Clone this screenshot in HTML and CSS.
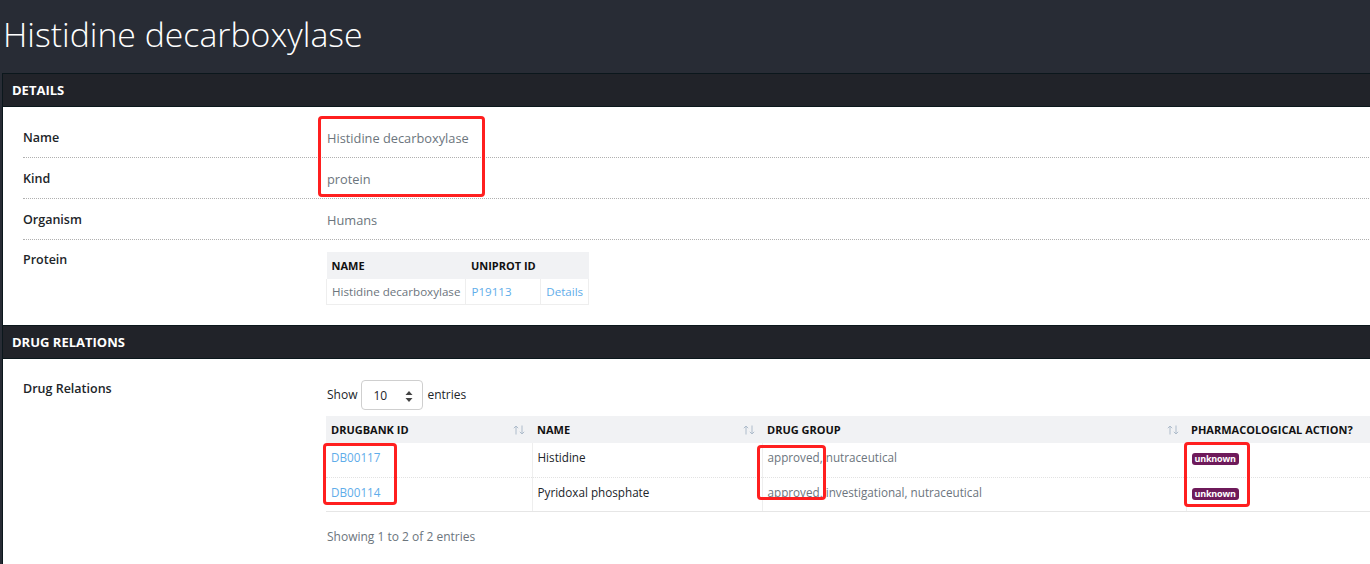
FILE: index.html
```html
<!DOCTYPE html>
<html lang="en">
<head>
  <meta charset="UTF-8">
  <title>Histidine decarboxylase</title>
  <link rel="stylesheet" href="styles.css">
</head>
<body>
  <h1 class="page-title">Histidine decarboxylase</h1>

  <div class="card">
    <!-- Details -->
    <div class="card-header">Details</div>
    <div class="card-body">
      <div class="row">
        <div class="label">Name</div>
        <div class="value">Histidine decarboxylase</div>
      </div>
      <div class="row">
        <div class="label">Kind</div>
        <div class="value">protein</div>
      </div>
      <div class="row">
        <div class="label">Organism</div>
        <div class="value">Humans</div>
      </div>
      <div class="row last">
        <div class="label">Protein</div>
        <div class="value">
          <table class="mini-table">
            <thead>
              <tr><th class="c1">Name</th><th class="c2">Uniprot ID</th><th class="c3"></th></tr>
            </thead>
            <tbody>
              <tr><td>Histidine decarboxylase</td><td><a href="#">P19113</a></td><td><a href="#">Details</a></td></tr>
            </tbody>
          </table>
        </div>
      </div>
    </div>

    <!-- Drug relations -->
    <div class="card-header">Drug Relations</div>
    <div class="card-body tall">
      <div class="row last">
        <div class="label">Drug Relations</div>
        <div class="value">
          <div class="length">
            Show
            <span class="select">10
              <svg class="caret" width="8" height="11" viewBox="0 0 8 11"><path d="M4 0 L7.5 4 H0.5 Z M4 11 L7.5 7 H0.5 Z" fill="#444"/></svg>
            </span>
            entries
          </div>
          <table class="data-table">
            <thead>
              <tr>
                <th class="d1">Drugbank ID<svg class="sort" width="12" height="10" viewBox="0 0 12 10"><path d="M3 9.5 V1 M0.8 3.2 L3 1 L5.2 3.2 M9 0.5 V9 M6.8 6.8 L9 9 L11.2 6.8" fill="none" stroke="#aebccb" stroke-width="1"/></svg></th>
                <th class="d2">Name<svg class="sort" width="12" height="10" viewBox="0 0 12 10"><path d="M3 9.5 V1 M0.8 3.2 L3 1 L5.2 3.2 M9 0.5 V9 M6.8 6.8 L9 9 L11.2 6.8" fill="none" stroke="#aebccb" stroke-width="1"/></svg></th>
                <th class="d3">Drug Group<svg class="sort" width="12" height="10" viewBox="0 0 12 10"><path d="M3 9.5 V1 M0.8 3.2 L3 1 L5.2 3.2 M9 0.5 V9 M6.8 6.8 L9 9 L11.2 6.8" fill="none" stroke="#aebccb" stroke-width="1"/></svg></th>
                <th class="d4">Pharmacological Action?</th>
              </tr>
            </thead>
            <tbody>
              <tr>
                <td><a href="#">DB00117</a></td>
                <td class="dark">Histidine</td>
                <td>approved, nutraceutical</td>
                <td><span class="badge">unknown</span></td>
              </tr>
              <tr>
                <td><a href="#">DB00114</a></td>
                <td class="dark">Pyridoxal phosphate</td>
                <td>approved, investigational, nutraceutical</td>
                <td><span class="badge">unknown</span></td>
              </tr>
            </tbody>
          </table>
          <div class="info">Showing 1 to 2 of 2 entries</div>
        </div>
      </div>
    </div>
  </div>

  <!-- annotation boxes -->
  <div class="mark m1"></div>
  <div class="mark m2"></div>
  <div class="mark m3"></div>
  <div class="mark m4"></div>
</body>
</html>
```

FILE: styles.css
```css
html, body {
  overflow: hidden;
}

body {
  margin: 0;
  background: #282c35;
  font-family: "Open Sans", "Noto Sans", sans-serif;
  font-size: 12.8px;
  color: #212529;
  position: relative;
  height: 564px;
}

a {
  color: #5fadea;
  text-decoration: none;
}

.page-title {
  margin: 0;
  padding: 11px 3px 0;
  height: 73px;
  box-sizing: border-box;
  font-size: 33.8px;
  line-height: 46px;
  font-weight: 300;
  color: #fff;
}

.card {
  margin-left: 2px;
  width: 1420px;
  border-left: 1px solid #0b171c;
}

.card-header {
  height: 32px;
  line-height: 32px;
  padding: 0 9px;
  background: #212329;
  border-top: 1px solid #0b171c;
  border-bottom: 1px solid #0b171c;
  color: #fff;
  font-size: 13px;
  font-weight: 700;
  text-transform: uppercase;
}

.card-body {
  background: #fff;
  padding: 10px 0 0 20px;
}

.card-body.tall {
  padding-bottom: 0;
}

.row {
  display: flex;
  padding: 13px 0 11px;
  line-height: 16px;
  border-bottom: 1px dotted #b0b0b0;
}

.row.last {
  border-bottom: none;
  padding: 12px 0 20px;
}

.label {
  width: 304px;
  flex-shrink: 0;
  font-size: 12.5px;
  font-weight: 600;
  color: #212529;
}

.value {
  color: #6c757d;
}

/* protein table */
.mini-table {
  border-collapse: collapse;
  margin-left: -1px;
  white-space: nowrap;
  font-size: 11.6px;
}

.mini-table th {
  background: #f1f2f4;
  text-align: left;
  text-transform: uppercase;
  font-size: 11px;
  font-weight: 700;
  color: #111;
  height: 27px;
  padding: 0 5px;
}

.mini-table td {
  height: 25px;
  padding: 0 5px;
  border: 1px solid #eeeeee;
  border-top: none;
}

.mini-table .c1 { width: 129px; }
.mini-table .c2 { width: 64px; }
.mini-table .c3 { width: 38px; }

/* drug relations table */
.length {
  display: flex;
  align-items: center;
  gap: 4px;
  height: 30px;
  margin-top: -1px;
  font-size: 12px;
  color: #212529;
}

.select {
  display: inline-flex;
  align-items: center;
  justify-content: space-between;
  box-sizing: border-box;
  width: 62px;
  height: 30px;
  padding: 2px 9px 0 11px;
  border: 1px solid #cfcfcf;
  border-radius: 4px;
}

.data-table {
  border-collapse: collapse;
  margin-top: 6px;
  margin-left: -1px;
  table-layout: fixed;
  width: 1070px;
  white-space: nowrap;
  font-size: 11.7px;
}

.data-table th {
  position: relative;
  background: #f1f2f4;
  text-align: left;
  text-transform: uppercase;
  font-size: 11px;
  font-weight: 700;
  color: #111;
  height: 27px;
  padding: 0 5px;
}

.sort {
  position: absolute;
  right: 7px;
  top: 9px;
}

.data-table .d1 { width: 196px; }
.data-table .d2 { width: 220px; }
.data-table .d3 { width: 414px; }

.data-table td {
  height: 34px;
  padding: 6px 5px 0;
  vertical-align: top;
  box-sizing: border-box;
  color: #6c757d;
  border-left: 1px solid #eeeeee;
  border-bottom: 1px dotted #e2e2e2;
}

.data-table td:first-child {
  border-left: none;
}

.data-table tr:last-child td {
  border-bottom: 1px solid #e6e6e6;
}

.data-table td.dark {
  color: #212529;
}

.badge {
  display: inline-block;
  margin-top: 2px;
  padding: 0 3px;
  line-height: 12px;
  border-radius: 3px;
  background: #6e1a5a;
  color: #fff;
  font-size: 9px;
  font-weight: 700;
  letter-spacing: -0.2px;
}

.info {
  margin-top: 17px;
  font-size: 12px;
  color: #6c757d;
}

/* red annotation boxes over the screenshot */
.mark {
  position: absolute;
  border: 3px solid #ff1f1f;
  border-radius: 4px;
  box-sizing: border-box;
}

.m1 { left: 318px; top: 116px; width: 167px; height: 81px; }
.m2 { left: 323px; top: 443px; width: 74px; height: 62px; }
.m3 { left: 757px; top: 445px; width: 69px; height: 55px; }
.m4 { left: 1184px; top: 442px; width: 66px; height: 65px; }
```
